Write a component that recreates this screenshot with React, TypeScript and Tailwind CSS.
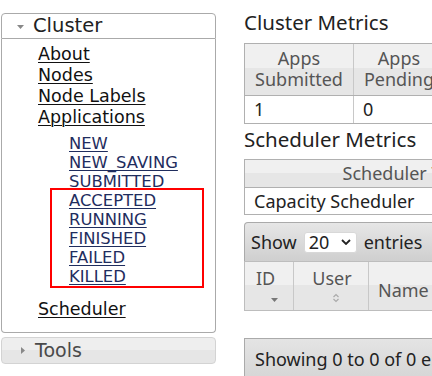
import React from "react";

const sub = ["NEW", "NEW_SAVING", "SUBMITTED", "ACCEPTED", "RUNNING", "FINISHED", "FAILED", "KILLED"];

export default function App() {
  return (
    <div className="relative w-[432px] h-[376px] overflow-hidden bg-white flex">
      {/* Left nav */}
      <div className="w-[215px] ml-[1px] pt-[13px] shrink-0 font-['DejaVu_Sans',sans-serif]">
        <div className="h-[26px] rounded-t-[4px] border border-[#aaa] bg-white flex items-center text-[19.5px] text-[#222]">
          <svg width="7" height="4" viewBox="0 0 7 4" className="ml-[15px] mr-[9px] mt-[1px]">
            <polygon points="0,0 7,0 3.5,4" fill="#888" />
          </svg>
          <span>Cluster</span>
        </div>
        <div className="border-x border-b border-[#aaa] rounded-b-[4px] pt-[5px] pb-[12px] pl-[36px]">
          {["About", "Nodes", "Node Labels", "Applications"].map((t) => (
            <div key={t} className="text-[17.5px] leading-[21px] text-[#111]">
              <span className="underline decoration-1 underline-offset-2">{t}</span>
            </div>
          ))}
          <div className="pt-[6px] pl-[31px]">
            {sub.map((t) => (
              <div key={t} className="text-[16.4px] leading-[19px] text-[#1f2d5e]">
                <span className="underline decoration-1 underline-offset-2">{t}</span>
              </div>
            ))}
          </div>
          <div className="mt-[13px] text-[17.5px] leading-[21px] text-[#111]">
            <span className="underline decoration-1 underline-offset-2">Scheduler</span>
          </div>
        </div>
        <div className="mt-[4px] h-[27px] rounded-[4px] border border-[#d3d3d3] bg-[linear-gradient(#eeeeee_50%,#e6e6e6_50%)] flex items-center text-[19px] text-[#4a4a4a]">
          <svg width="4" height="7" viewBox="0 0 4 7" className="ml-[19px] mr-[10px]">
            <polygon points="0,0 4,3.5 0,7" fill="#888" />
          </svg>
          <span>Tools</span>
        </div>
      </div>

      {/* Right content */}
      <div className="ml-[28px] flex-1 min-w-0 overflow-hidden font-['Noto_Sans',sans-serif] text-[#222]">
        <div className="pt-[9px] text-[20.5px] leading-[26px] whitespace-nowrap">Cluster Metrics</div>
        <div className="mt-[8px] w-[600px] border border-[#b0b0b0]">
          <div className="flex border-b border-[#b0b0b0] bg-[linear-gradient(#f0f0f0_48%,#e6e6e6_48%)] text-[18px] leading-[21px] text-[#555]">
            <div className="w-[109px] shrink-0 border-r border-[#c8c8c8] pt-[4px] pb-[5px] text-center">Apps<br />Submitted</div>
            <div className="w-[91px] shrink-0 border-r border-[#c8c8c8] pt-[4px] pb-[5px] text-center">Apps<br />Pending</div>
            <div className="w-[91px] shrink-0 border-r border-[#c8c8c8] pt-[4px] pb-[5px] text-center">Apps<br />Running</div>
          </div>
          <div className="flex text-[18px] leading-[20px]">
            <div className="w-[109px] shrink-0 border-r border-[#c8c8c8] pt-[3px] pb-[4px] pl-[9px]">1</div>
            <div className="w-[91px] shrink-0 border-r border-[#c8c8c8] pt-[3px] pb-[4px] pl-[9px]">0</div>
            <div className="w-[91px] shrink-0 border-r border-[#c8c8c8] pt-[3px] pb-[4px] pl-[9px]">1</div>
          </div>
        </div>

        <div className="mt-[2px] text-[20.5px] leading-[26px] whitespace-nowrap">Scheduler Metrics</div>
        <div className="mt-[7px] w-[600px] border border-[#b0b0b0]">
          <div className="flex border-b border-[#b0b0b0] bg-[linear-gradient(#f0f0f0_48%,#e6e6e6_48%)] text-[18px] leading-[20px] text-[#555]">
            <div className="w-[325px] shrink-0 border-r border-[#c8c8c8] pt-[3px] pb-[4px] text-center whitespace-nowrap">Scheduler Type</div>
          </div>
          <div className="flex text-[18px] leading-[20px]">
            <div className="w-[325px] shrink-0 border-r border-[#c8c8c8] pt-[3px] pb-[3px] pl-[9px] whitespace-nowrap">Capacity Scheduler</div>
          </div>
        </div>

        <div className="mt-[7px] w-[600px] h-[39px] rounded-t-[4px] border border-b-0 border-[#aaa] bg-[linear-gradient(#e6e6e6,#cfcfcf)] flex items-center pl-[6px] text-[18px] whitespace-nowrap">
          <span>Show</span>
          <div className="ml-[7px] w-[53px] h-[21px] rounded-[3px] bg-white border border-[#d8d8d8] flex items-center pl-[4px] text-[18px] leading-[20px]">
            <span>20</span>
            <svg width="10" height="6" viewBox="0 0 10 6" className="ml-[12px]">
              <polyline points="1,1 5,5 9,1" fill="none" stroke="#222" strokeWidth="1.8" />
            </svg>
          </div>
          <span className="ml-[7px]">entries</span>
        </div>
        <div className="w-[600px] flex border border-[#bdbdbd] bg-[linear-gradient(#f0f0f0_48%,#e6e6e6_48%)] text-[18px] leading-[20px] text-[#555]">
          <div className="w-[49px] h-[48px] shrink-0 border-r border-[#c8c8c8] flex flex-col items-center pt-[6px]">
            <span className="mr-[7px]">ID</span>
            <svg width="7" height="4" viewBox="0 0 7 4" className="ml-[10px] mt-[10px]">
              <polygon points="0,0 7,0 3.5,4" fill="#777" />
            </svg>
          </div>
          <div className="w-[75px] h-[48px] shrink-0 border-r border-[#c8c8c8] flex flex-col items-center pt-[6px]">
            <span className="ml-[2px]">User</span>
            <svg width="6" height="10" viewBox="0 0 6 10" className="ml-[10px] mt-[5px]">
              <polyline points="0.5,4 3,1.5 5.5,4" fill="none" stroke="#aaa" strokeWidth="1.2" />
              <polyline points="0.5,6 3,8.5 5.5,6" fill="none" stroke="#aaa" strokeWidth="1.2" />
            </svg>
          </div>
          <div className="w-[120px] h-[48px] shrink-0 border-r border-[#c8c8c8] pt-[18px] pl-[9px]">Name</div>
        </div>

        <div className="mt-[27px] w-[600px] h-[60px] border border-[#aaa] bg-[linear-gradient(#e4e4e4,#cfcfcf)] pl-[10px] pt-[10px] text-[18px] leading-[20px] whitespace-nowrap">
          Showing 0 to 0 of 0 entries
        </div>
      </div>

      {/* annotation box */}
      <div className="absolute left-[50px] top-[188px] w-[154px] h-[100px] border-2 border-[#ff0000]" />
    </div>
  );
}
